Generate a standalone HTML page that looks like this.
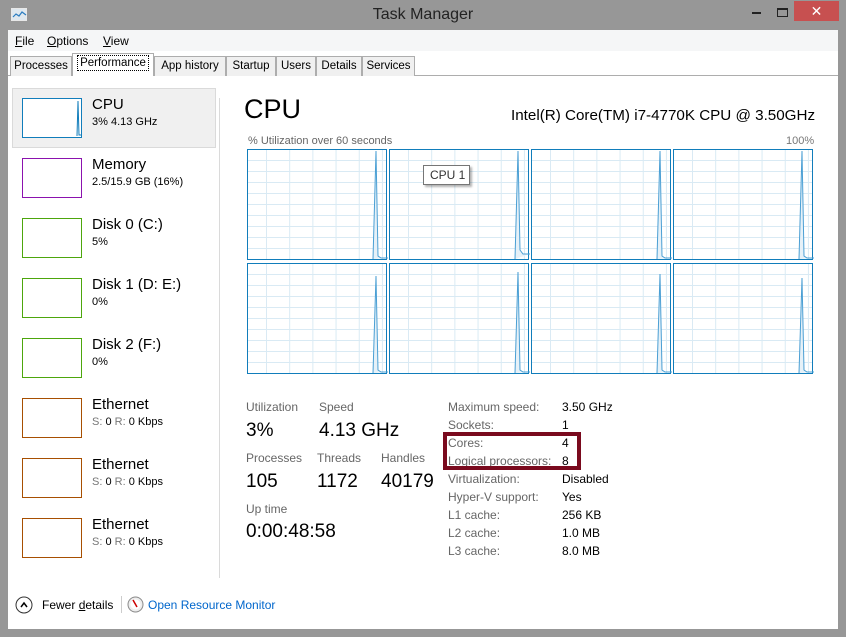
<!DOCTYPE html>
<html><head><meta charset="utf-8"><style>
*{margin:0;padding:0;box-sizing:border-box}
body{width:846px;height:637px;background:#979797;font-family:"Liberation Sans",sans-serif;position:relative;overflow:hidden;color:#000}
.a{position:absolute;white-space:nowrap}
.client{position:absolute;left:8px;top:30px;width:830px;height:599px;background:#fff}
.menu{position:absolute;left:8px;top:30px;width:830px;height:21px;background:#f5f6f7;font-size:12px}
.tab{position:absolute;top:56px;height:20px;background:#f0f0f0;border:1px solid #adadad;border-bottom:none;font-size:11.5px;padding:3px 0 0 0;text-align:center}
.th{position:absolute;left:22px;width:60px;height:40px;background:#fff}
.nm{position:absolute;left:92px;font-size:15px;color:#000}
.sb{position:absolute;left:92px;font-size:11px;color:#000}
.g{position:absolute;width:140px;height:111px;border:1px solid #117dbb;background-color:#fff;
background-image:linear-gradient(to right,#d9eaf4 1px,transparent 1px),linear-gradient(to bottom,#d9eaf4 1px,transparent 1px);
background-size:23.2px 11px;background-position:18px 10px}
.g svg{position:absolute;left:0;top:0}
.k{font-size:12px;color:#666}
.v{font-size:12px;color:#000}
.big{font-size:19px;color:#000}
</style></head><body>
<div class="a" style="left:11px;top:8px;width:16px;height:13px;border:1px solid #e8e8e8;background:#dfe8ef"></div>
<svg class="a" style="left:12px;top:9px" width="15" height="11"><polyline points="1,8 4,5 7,7 10,3 14,6" fill="none" stroke="#2a7cc0" stroke-width="1.2"/></svg>
<div class="a" style="left:0;top:6px;width:846px;text-align:center;font-size:16px;color:#222">Task Manager</div>
<div class="a" style="left:752px;top:12px;width:9px;height:2px;background:#222"></div>
<div class="a" style="left:777px;top:8px;width:11px;height:9px;border:1px solid #222;border-top-width:2px"></div>
<div class="a" style="left:794px;top:1px;width:45px;height:20px;background:#c75050;color:#fff;font-size:14px;text-align:center;line-height:20px">✕</div>
<div class="client"></div>
<div class="menu"></div>
<div class="a" style="left:15px;top:34px;font-size:12px"><u>F</u>ile</div>
<div class="a" style="left:47px;top:34px;font-size:12px"><u>O</u>ptions</div>
<div class="a" style="left:103px;top:34px;font-size:12px"><u>V</u>iew</div>
<div class="a" style="left:8px;top:75px;width:830px;height:1px;background:#adadad"></div>
<div class="tab" style="left:10px;width:62px">Processes</div>
<div class="tab" style="left:72px;top:53px;height:23px;width:82px;background:#fff;padding-top:3px"><span style="outline:1px dotted #000;padding:1px 2px">Performance</span></div>
<div class="tab" style="left:154px;width:72px">App history</div>
<div class="tab" style="left:226px;width:50px">Startup</div>
<div class="tab" style="left:276px;width:40px">Users</div>
<div class="tab" style="left:316px;width:46px">Details</div>
<div class="tab" style="left:362px;width:53px">Services</div>

<div class="a" style="left:12px;top:88px;width:204px;height:60px;background:#f0f0f0;border:1px solid #dadada"></div>
<div class="a" style="left:219px;top:98px;width:1px;height:480px;background:#dadada"></div>

<div class="th" style="top:98px;border:1px solid #117dbb"><svg width="58" height="38"><polyline points="54,37 55,2 56,36 58,36" fill="none" stroke="#117dbb" stroke-width="1"/></svg></div>
<div class="nm" style="top:96px">CPU</div><div class="sb" style="top:116px">3% 4.13 GHz</div>
<div class="th" style="top:158px;border:1px solid #8b12ae"></div>
<div class="nm" style="top:156px">Memory</div><div class="sb" style="top:176px">2.5/15.9 GB (16%)</div>
<div class="th" style="top:218px;border:1px solid #4da60c"></div>
<div class="nm" style="top:216px">Disk 0 (C:)</div><div class="sb" style="top:236px">5%</div>
<div class="th" style="top:278px;border:1px solid #4da60c"></div>
<div class="nm" style="top:276px">Disk 1 (D: E:)</div><div class="sb" style="top:296px">0%</div>
<div class="th" style="top:338px;border:1px solid #4da60c"></div>
<div class="nm" style="top:336px">Disk 2 (F:)</div><div class="sb" style="top:356px">0%</div>
<div class="th" style="top:398px;border:1px solid #a74f01"></div>
<div class="nm" style="top:396px">Ethernet</div><div class="sb" style="top:416px"><span style="color:#777">S:</span> 0 <span style="color:#777">R:</span> 0 Kbps</div>
<div class="th" style="top:458px;border:1px solid #a74f01"></div>
<div class="nm" style="top:456px">Ethernet</div><div class="sb" style="top:476px"><span style="color:#777">S:</span> 0 <span style="color:#777">R:</span> 0 Kbps</div>
<div class="th" style="top:518px;border:1px solid #a74f01"></div>
<div class="nm" style="top:516px">Ethernet</div><div class="sb" style="top:536px"><span style="color:#777">S:</span> 0 <span style="color:#777">R:</span> 0 Kbps</div>

<div class="a" style="left:244px;top:94px;font-size:27px">CPU</div>
<div class="a" style="left:511px;top:107px;font-size:15.2px">Intel(R) Core(TM) i7-4770K CPU @ 3.50GHz</div>
<div class="a" style="left:248px;top:135px;font-size:11px;color:#666">% Utilization over 60 seconds</div>
<div class="a" style="left:786px;top:135px;font-size:11px;color:#777">100%</div>

<div class="g" style="left:247px;top:149px"><svg width="140" height="111"><polyline points="125,109 128,1 130,106 133,108 140,108" fill="#e6f1f8" stroke="#4a9fd4"/></svg></div>
<div class="g" style="left:389px;top:149px"><svg width="140" height="111"><polyline points="125,109 128,1 130,100 133,104 140,104" fill="#e6f1f8" stroke="#4a9fd4"/></svg></div>
<div class="g" style="left:531px;top:149px"><svg width="140" height="111"><polyline points="125,109 128,1 130,106 133,108 140,108" fill="#e6f1f8" stroke="#4a9fd4"/></svg></div>
<div class="g" style="left:673px;top:149px"><svg width="140" height="111"><polyline points="125,109 128,1 130,106 133,108 140,108" fill="#e6f1f8" stroke="#4a9fd4"/></svg></div>
<div class="g" style="left:247px;top:263px"><svg width="140" height="111"><polyline points="125,109 128,12 130,106 133,108 140,108" fill="#e6f1f8" stroke="#4a9fd4"/></svg></div>
<div class="g" style="left:389px;top:263px"><svg width="140" height="111"><polyline points="125,109 128,8 130,106 133,108 140,108" fill="#e6f1f8" stroke="#4a9fd4"/></svg></div>
<div class="g" style="left:531px;top:263px"><svg width="140" height="111"><polyline points="125,109 128,10 130,106 133,108 140,108" fill="#e6f1f8" stroke="#4a9fd4"/></svg></div>
<div class="g" style="left:673px;top:263px"><svg width="140" height="111"><polyline points="125,109 128,14 130,106 133,108 140,108" fill="#e6f1f8" stroke="#4a9fd4"/></svg></div>
<div class="a" style="left:423px;top:165px;width:47px;height:20px;background:#fff;border:1px solid #767676;box-shadow:2px 2px 2px rgba(0,0,0,.3);font-size:12px;padding:2px 0 0 6px;color:#333">CPU 1</div>

<div class="a k" style="left:246px;top:400px">Utilization</div>
<div class="a k" style="left:319px;top:400px">Speed</div>
<div class="a big" style="left:246px;top:420px">3%</div>
<div class="a big" style="left:319px;top:420px">4.13 GHz</div>
<div class="a k" style="left:246px;top:451px">Processes</div>
<div class="a k" style="left:317px;top:451px">Threads</div>
<div class="a k" style="left:381px;top:451px">Handles</div>
<div class="a big" style="left:246px;top:471px">105</div>
<div class="a big" style="left:317px;top:471px">1172</div>
<div class="a big" style="left:381px;top:471px">40179</div>
<div class="a k" style="left:246px;top:502px">Up time</div>
<div class="a big" style="left:246px;top:521px">0:00:48:58</div>

<div class="a k" style="left:448px;top:400px">Maximum speed:</div><div class="a v" style="left:562px;top:400px">3.50 GHz</div>
<div class="a k" style="left:448px;top:418px">Sockets:</div><div class="a v" style="left:562px;top:418px">1</div>
<div class="a k" style="left:448px;top:436px">Cores:</div><div class="a v" style="left:562px;top:436px">4</div>
<div class="a k" style="left:448px;top:454px">Logical processors:</div><div class="a v" style="left:562px;top:454px">8</div>
<div class="a k" style="left:448px;top:472px">Virtualization:</div><div class="a v" style="left:562px;top:472px">Disabled</div>
<div class="a k" style="left:448px;top:490px">Hyper-V support:</div><div class="a v" style="left:562px;top:490px">Yes</div>
<div class="a k" style="left:448px;top:508px">L1 cache:</div><div class="a v" style="left:562px;top:508px">256 KB</div>
<div class="a k" style="left:448px;top:526px">L2 cache:</div><div class="a v" style="left:562px;top:526px">1.0 MB</div>
<div class="a k" style="left:448px;top:544px">L3 cache:</div><div class="a v" style="left:562px;top:544px">8.0 MB</div>
<div class="a" style="left:443px;top:432px;width:138px;height:38px;border:4px solid #7a0a1e"></div>

<svg class="a" style="left:15px;top:596px" width="18" height="18"><circle cx="9" cy="9" r="8" fill="#fff" stroke="#333"/><polyline points="6,11 9,7 12,11" fill="none" stroke="#000" stroke-width="1.5"/></svg>
<div class="a" style="left:42px;top:598px;font-size:12px">Fewer <u>d</u>etails</div>
<div class="a" style="left:121px;top:596px;width:1px;height:17px;background:#ccc"></div>
<svg class="a" style="left:127px;top:596px" width="17" height="17"><circle cx="8.5" cy="8.5" r="7.5" fill="#eee" stroke="#888"/><circle cx="8.5" cy="8.5" r="5" fill="#fff"/><line x1="6" y1="4" x2="10" y2="11" stroke="#c00" stroke-width="1.5"/></svg>
<div class="a" style="left:148px;top:598px;font-size:12px;color:#0066cc">Open Resource Monitor</div>
</body></html>
